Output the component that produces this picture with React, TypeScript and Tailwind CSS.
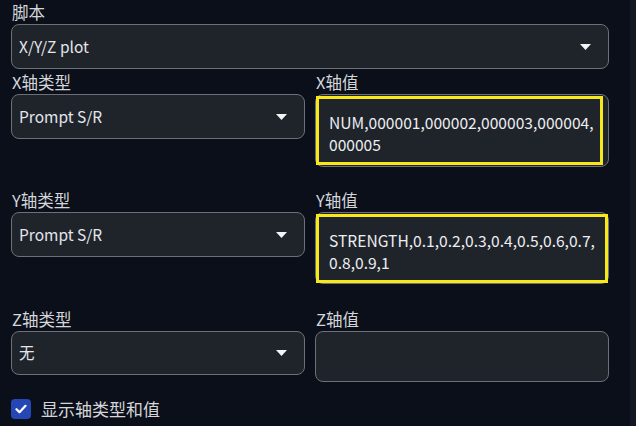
const font = { fontFamily: '"Noto Sans CJK SC", "Noto Sans", sans-serif' };

function Caret() {
  return (
    <svg width="11" height="6" viewBox="0 0 11 6" className="shrink-0">
      <path d="M0 0h11L5.5 6z" fill="#f3f4f6" />
    </svg>
  );
}

function Label({ children }: { children: React.ReactNode }) {
  return <div className="h-[22px] pl-[1px] text-[16.5px] leading-[21px] text-[#d4d6da]">{children}</div>;
}

function Dropdown({ value, h = "h-[45px]" }: { value: string; h?: string }) {
  return (
    <div
      className={`flex ${h} items-center justify-between rounded-[8px] border border-[#6c7077] bg-[#1f232a] pl-[7px] pr-[17px] text-[15.5px] text-[#e4e6ea]`}
    >
      <span>{value}</span>
      <Caret />
    </div>
  );
}

function ValueBox({
  lines,
  h,
  highlight,
}: {
  lines: string[];
  h: string;
  highlight?: string;
}) {
  return (
    <div className={`relative ${h} rounded-[8px] border border-[#6c7077] bg-[#1f232a]`}>
      {lines.length > 0 && (
        <div className="pl-[13px] pt-[16px] text-[15.6px] leading-[22px] text-[#eceef1]">
          {lines.map((l) => (
            <div key={l}>{l}</div>
          ))}
        </div>
      )}
      {highlight && (
        <div className={`absolute left-0 top-[1px] h-[69px] ${highlight} border-[3px] border-[#f6e81a]`} />
      )}
    </div>
  );
}

export default function App() {
  return (
    <div className="flex h-[426px] w-[636px] overflow-hidden bg-[#0b0f19]" style={font}>
      <div className="w-[630px] pl-[11px] pr-[21px] pt-[2px]">
        <Label>脚本</Label>
        <Dropdown value="X/Y/Z plot" />

        <div className="mt-[3px] grid grid-cols-2 gap-x-[10px]">
          <div>
            <Label>X轴类型</Label>
            <Dropdown value="Prompt S/R" />
          </div>
          <div>
            <Label>X轴值</Label>
            <ValueBox
              h="h-[73px]"
              lines={["NUM,000001,000002,000003,000004,", "000005"]}
              highlight="w-[287px]"
            />
          </div>
        </div>

        <div className="mt-[23px] grid grid-cols-2 gap-x-[10px]">
          <div>
            <Label>Y轴类型</Label>
            <Dropdown value="Prompt S/R" />
          </div>
          <div>
            <Label>Y轴值</Label>
            <ValueBox
              h="h-[72px]"
              lines={["STRENGTH,0.1,0.2,0.3,0.4,0.5,0.6,0.7,", "0.8,0.9,1"]}
              highlight="w-[292px]"
            />
          </div>
        </div>

        <div className="mt-[25px] grid grid-cols-2 gap-x-[10px]">
          <div>
            <Label>Z轴类型</Label>
            <Dropdown value="无" h="h-[44px]" />
          </div>
          <div>
            <Label>Z轴值</Label>
            <ValueBox h="h-[51px]" lines={[]} />
          </div>
        </div>

        <div className="mt-[14px] flex items-center gap-[10px]">
          <div className="flex h-[20px] w-[20px] items-center justify-center rounded-[4px] bg-[#2546b5]">
            <svg width="12" height="10" viewBox="0 0 12 10">
              <path d="M1.5 5.2l3 3L10.5 1.8" fill="none" stroke="#fff" strokeWidth="2.2" strokeLinecap="round" strokeLinejoin="round" />
            </svg>
          </div>
          <span className="text-[17px] text-[#d4d6da]">显示轴类型和值</span>
        </div>
      </div>
      <div className="w-[6px] bg-[#121722]" />
    </div>
  );
}
